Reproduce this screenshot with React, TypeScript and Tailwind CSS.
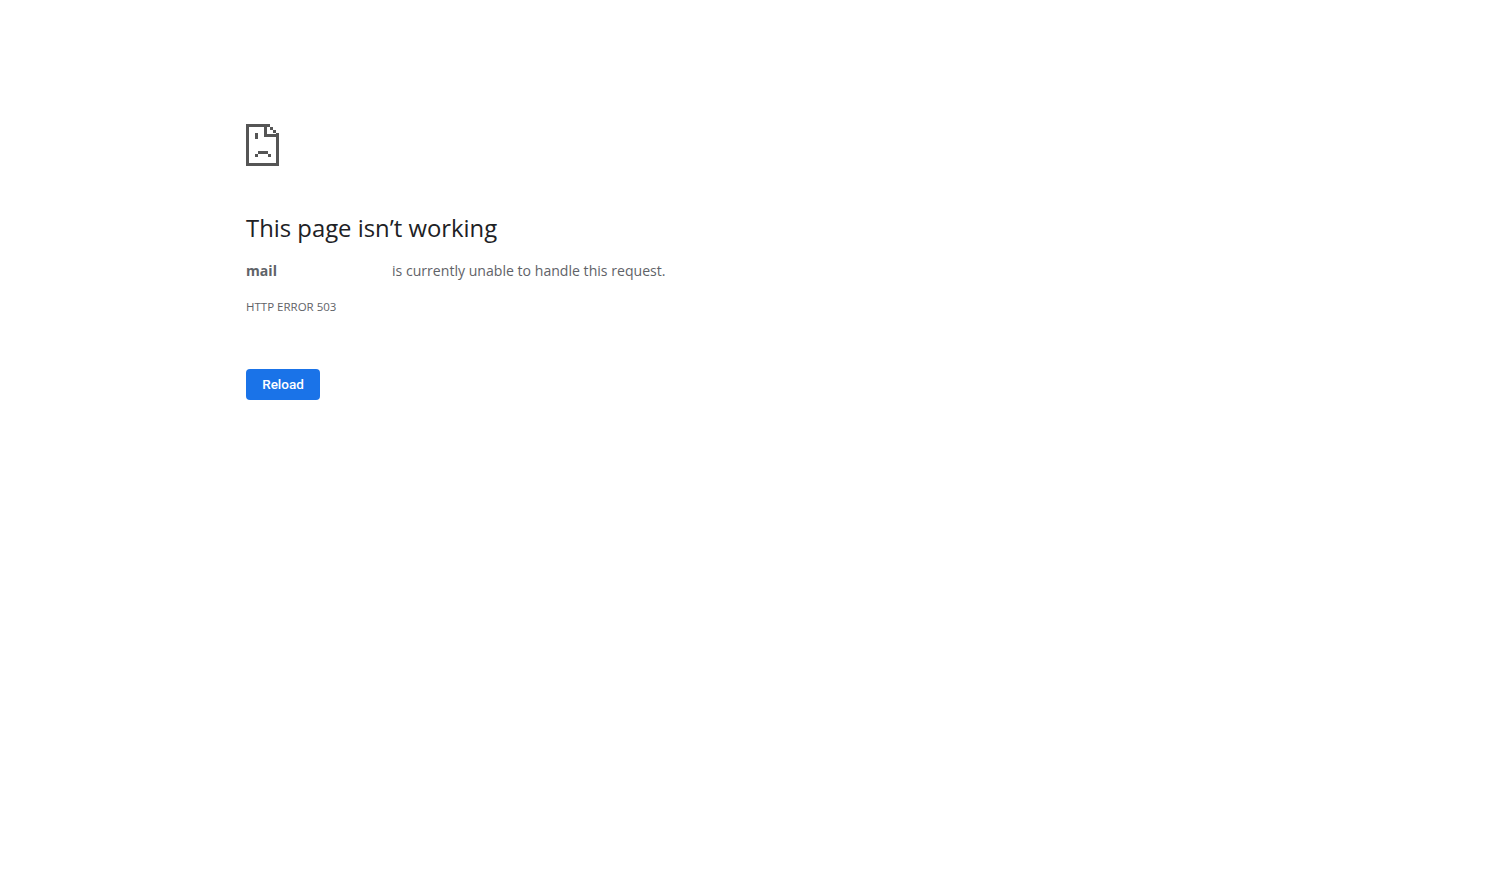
export default function App() {
  return (
    <div className="h-[886px] w-full bg-white pl-[246px] pt-[124px] font-['Open_Sans','Noto_Sans',sans-serif]">
      <svg width="33" height="42" viewBox="0 0 33 42" className="block" fill="#555555" shapeRendering="crispEdges">
        <rect x="0" y="0" width="24" height="3" />
        <rect x="0" y="0" width="3" height="42" />
        <rect x="0" y="39" width="33" height="3" />
        <rect x="30" y="9" width="3" height="33" />
        <rect x="18" y="0" width="3" height="13" />
        <rect x="18" y="10" width="15" height="3" />
        <rect x="24" y="3" width="3" height="3" />
        <rect x="27" y="6" width="3" height="3" />
        <rect x="9" y="9" width="3" height="6" />
        <rect x="12" y="27" width="10" height="3" />
        <rect x="9" y="30" width="3" height="3" />
        <rect x="22" y="30" width="3" height="3" />
      </svg>
      <h1 className="mt-[46px] text-[23.85px] leading-[32px] font-medium text-[#202124]">This page isn’t working</h1>
      <p className="mt-[17px] flex text-[14.1px] leading-[20px] text-[#5f6368]">
        <span className="w-[146px] font-bold">mail</span>
        <span>is currently unable to handle this request.</span>
      </p>
      <p className="mt-[18px] text-[11.5px] leading-[16px] text-[#5f6368]">HTTP ERROR 503</p>
      <button className="mt-[54px] block h-[31px] w-[74px] rounded-[4px] bg-[#1a73e8] text-center font-['Roboto',sans-serif] text-[13.5px] font-medium text-white">Reload</button>
    </div>
  );
}
